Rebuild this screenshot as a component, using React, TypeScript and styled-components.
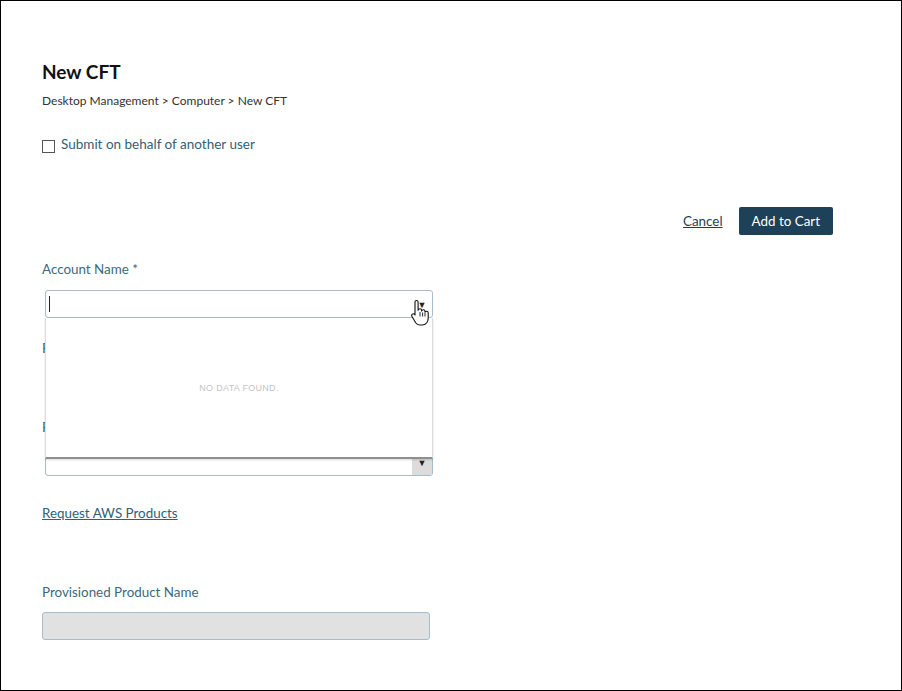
import React from 'react';
import styled, { createGlobalStyle } from 'styled-components';

const GlobalStyle = createGlobalStyle`
  html, body {
    margin: 0;
    padding: 0;
    background: #fff;
  }
  body {
    font-family: Lato, "Open Sans", sans-serif;
  }
`;

const Frame = styled.div`
  box-sizing: border-box;
  width: 902px;
  height: 691px;
  border: 1px solid #000;
  padding: 60px 0 0 41px;
  overflow: hidden;
`;

const Title = styled.h1`
  margin: 0;
  font-size: 19px;
  line-height: 22px;
  font-weight: 700;
  color: #111;
`;

const Breadcrumb = styled.div`
  margin-top: 10px;
  font-size: 12px;
  line-height: 16px;
  color: #333;
`;

const CheckRow = styled.label`
  display: flex;
  align-items: center;
  gap: 6px;
  margin-top: 26px;
  font-size: 13.5px;
  line-height: 18px;
  color: #2f6275;
`;

const Box = styled.span`
  display: inline-block;
  width: 11px;
  height: 11px;
  margin-top: 4px;
  border: 1px solid #555;
  background: #fff;
`;

const Actions = styled.div`
  display: flex;
  justify-content: flex-end;
  align-items: center;
  gap: 16px;
  margin-top: 54px;
  padding-right: 68px;
`;

const TextLink = styled.a<{ $dark?: boolean }>`
  font-size: 13.4px;
  line-height: 18px;
  color: ${(p) => (p.$dark ? '#1f3f50' : '#2f6275')};
  text-decoration: underline;
  cursor: pointer;
`;

const PrimaryButton = styled.button`
  height: 28px;
  padding: 0 13px;
  border: none;
  border-radius: 2px;
  background: #1d4159;
  color: #fff;
  font-family: inherit;
  font-size: 13.4px;
`;

const Form = styled.div`
  width: 391px;
  margin-top: 25px;
`;

const Field = styled.div`
  position: relative;
  margin-bottom: 21px;
`;

const Label = styled.div`
  font-size: 13.4px;
  line-height: 18px;
  color: #3b6a7c;
`;

const InputBox = styled.div<{ $disabled?: boolean }>`
  position: relative;
  box-sizing: border-box;
  height: 28px;
  margin-top: ${(p) => (p.$disabled ? '11px' : '12px')};
  margin-left: ${(p) => (p.$disabled ? '0' : '3px')};
  width: 388px;
  border: 1px solid #a8bccb;
  border-radius: 3px;
  background: ${(p) => (p.$disabled ? '#e1e1e1' : '#fff')};
  overflow: hidden;
`;

const Caret = styled.span`
  position: absolute;
  left: 3px;
  top: 5px;
  width: 1px;
  height: 16px;
  background: #222;
`;

const ArrowCell = styled.span<{ $shade?: boolean }>`
  position: absolute;
  right: 0;
  top: 0;
  bottom: 0;
  width: 20px;
  display: flex;
  align-items: center;
  justify-content: center;
  background: ${(p) => (p.$shade ? '#dcdcdc' : 'transparent')};
  font-size: 9px;
  color: #222;
`;

const Panel = styled.div`
  position: absolute;
  left: 3px;
  top: 58px;
  box-sizing: border-box;
  width: 388px;
  height: 141px;
  background: #fff;
  border: 1px solid #dcdcdc;
  border-top: none;
  border-bottom: 2px solid #8f8f8f;
  box-shadow: 0 1px 2px rgba(0, 0, 0, 0.15);
  z-index: 5;
  display: flex;
  align-items: center;
  justify-content: center;
`;

const Empty = styled.span`
  font-family: "Liberation Sans", Arial, sans-serif;
  font-size: 9px;
  letter-spacing: 0.3px;
  color: #c4c4c4;
`;

const Pointer = styled.svg`
  position: absolute;
  right: 3px;
  top: 39px;
  z-index: 6;
`;

const LinkRow = styled.div`
  margin-top: 26px;
`;

const LastField = styled.div`
  margin-top: 61px;
`;

const HandCursor = () => (
  <Pointer width="20" height="27" viewBox="0 0 20 27">
    <path
      d="M6.5 1.5c1 0 1.6.7 1.6 1.6v8.2c.3-1 1-1.5 1.9-1.5 1 0 1.6.7 1.6 1.6v.6c.3-.8 1-1.2 1.8-1.2 1 0 1.6.7 1.6 1.6v.8c.3-.6.9-1 1.6-1 1 0 1.6.7 1.6 1.6v5.5c0 3.6-2.3 6.7-6 6.7H9.6c-1.7 0-2.9-.8-3.9-2.2L2 17.5c-.6-.9-.4-1.9.4-2.4.8-.5 1.7-.3 2.3.5l.3.4V3.1c0-.9.6-1.6 1.5-1.6z"
      fill="#fff"
      stroke="#111"
      strokeWidth="1.1"
      strokeLinejoin="round"
    />
    <path d="M10 13v4.5M12.6 13.5v4M15 14v3.5" stroke="#111" strokeWidth="0.9" />
  </Pointer>
);

export default function App() {
  return (
    <>
      <GlobalStyle />
      <Frame>
        <Title>New CFT</Title>
        <Breadcrumb>Desktop Management &gt; Computer &gt; New CFT</Breadcrumb>
        <CheckRow>
          <Box />
          Submit on behalf of another user
        </CheckRow>

        <Actions>
          <TextLink $dark>Cancel</TextLink>
          <PrimaryButton>Add to Cart</PrimaryButton>
        </Actions>

        <Form>
          <Field>
            <Label>Account Name *</Label>
            <InputBox>
              <Caret />
              <ArrowCell>▼</ArrowCell>
            </InputBox>
            <HandCursor />
            <Panel>
              <Empty>NO DATA FOUND.</Empty>
            </Panel>
          </Field>
          <Field>
            <Label>Portfolio *</Label>
            <InputBox>
              <ArrowCell $shade>▼</ArrowCell>
            </InputBox>
          </Field>
          <Field>
            <Label>Product *</Label>
            <InputBox>
              <ArrowCell $shade>▼</ArrowCell>
            </InputBox>
          </Field>

          <LinkRow>
            <TextLink>Request AWS Products</TextLink>
          </LinkRow>

          <LastField>
            <Label>Provisioned Product Name</Label>
            <InputBox $disabled />
          </LastField>
        </Form>
      </Frame>
    </>
  );
}
